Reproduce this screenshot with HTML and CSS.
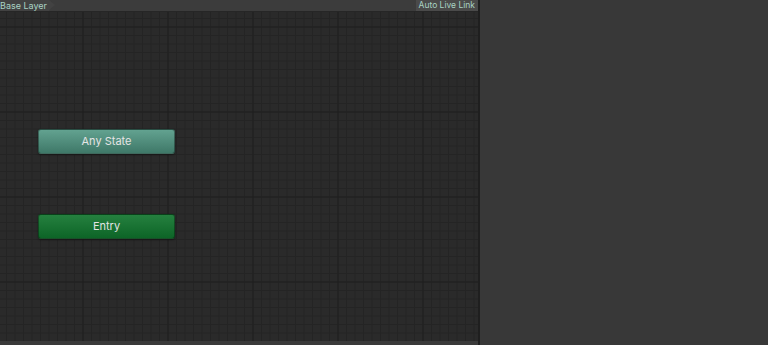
FILE: index.html
```html
<!DOCTYPE html>
<html>
<head>
<meta charset="utf-8">
<link rel="stylesheet" href="styles.css">
</head>
<body>
<div class="window">
  <div class="graph-col">
    <div class="toolbar">
      <div class="crumb">Base Layer</div>
      <div class="crumb-arrow"></div>
      <div class="spacer"></div>
      <div class="live-link">Auto Live Link</div>
    </div>
    <div class="canvas">
      <div class="node any-state">Any State</div>
      <div class="node entry">Entry</div>
    </div>
    <div class="bottom-bar"></div>
  </div>
  <div class="divider"></div>
  <div class="inspector"></div>
</div>
</body>
</html>
```
FILE: styles.css
```css
html, body {
  margin: 0;
  padding: 0;
  width: 768px;
  height: 345px;
  overflow: hidden;
  background: #383838;
  font-family: Inter, "Noto Sans", "Liberation Sans", sans-serif;
}
.window {
  display: flex;
  width: 768px;
  height: 345px;
}
.graph-col {
  width: 478px;
  display: flex;
  flex-direction: column;
}
.toolbar {
  height: 11px;
  background: #3c3c3c;
  display: flex;
  align-items: stretch;
  border-bottom: 1px solid #262626;
  box-sizing: content-box;
}
.crumb {
  background: #424242;
  color: #a9d2c4;
  font-size: 9px;
  line-height: 11px;
  padding: 0 2px 0 0;
  white-space: nowrap;
}
.crumb-arrow {
  width: 0;
  height: 0;
  border-top: 5.5px solid transparent;
  border-bottom: 5.5px solid transparent;
  border-left: 6px solid #424242;
}
.spacer { flex: 1; }
.live-link {
  background: #4a4a4a;
  color: #a9d2c4;
  font-size: 8.5px;
  line-height: 11px;
  padding: 0 3px;
  white-space: nowrap;
}
.canvas {
  position: relative;
  flex: 1;
  background-color: #2a2a2a;
  background-image:
    linear-gradient(to right, #1f1f1f 1px, transparent 1px),
    linear-gradient(to bottom, #1f1f1f 1px, transparent 1px),
    linear-gradient(to right, #242424 1px, transparent 1px),
    linear-gradient(to bottom, #242424 1px, transparent 1px);
  background-size: 85px 85px, 85px 85px, 8.5px 8.5px, 8.5px 8.5px;
  background-position: 82.5px 14.5px, 82.5px 14.5px, 6px 6px, 6px 6px;
}
.bottom-bar {
  height: 4px;
  background: #3a3a3a;
}
.divider {
  width: 2px;
  background: #1f1f1f;
}
.inspector {
  flex: 1;
  background: #383838;
}
.node {
  position: absolute;
  left: 38px;
  width: 137px;
  height: 25px;
  box-sizing: border-box;
  border-radius: 3px;
  color: #e4e4e4;
  font-size: 11px;
  line-height: 23px;
  text-align: center;
  border: 1px solid rgba(0,0,0,0.35);
  box-shadow: 0 1px 2px rgba(0,0,0,0.4);
}
.any-state {
  top: 117px;
  background: linear-gradient(to bottom, #62a290, #3f7868);
}
.entry {
  top: 202px;
  background: linear-gradient(to bottom, #25803f, #0d6527);
}
```
